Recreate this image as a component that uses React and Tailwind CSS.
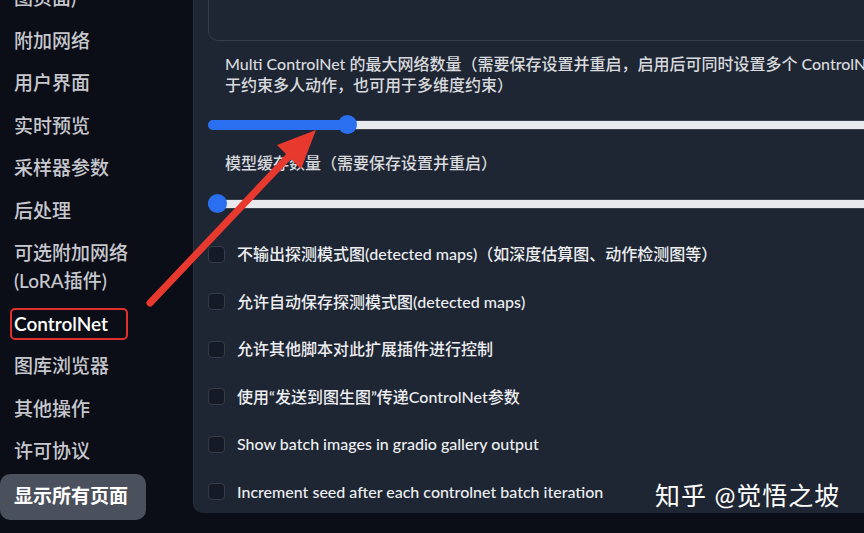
import React from "react";

const navItems = [
  "图页面)",
  "附加网络",
  "用户界面",
  "实时预览",
  "采样器参数",
  "后处理",
  "可选附加网络 (LoRA插件)",
  "ControlNet",
  "图库浏览器",
  "其他操作",
  "许可协议",
];

const options = [
  "不输出探测模式图(detected maps)（如深度估算图、动作检测图等）",
  "允许自动保存探测模式图(detected maps)",
  "允许其他脚本对此扩展插件进行控制",
  "使用“发送到图生图”传递ControlNet参数",
  "Show batch images in gradio gallery output",
  "Increment seed after each controlnet batch iteration",
];

const Slider = ({ value }) => (
  <div className="relative h-[18px] flex items-center">
    <div className="h-[10px] w-full rounded-full bg-[#e8e9ec] border border-[#3a404c]" />
    <div
      className="absolute left-0 h-[10px] rounded-full bg-[#2a6ff0]"
      style={{ width: value }}
    />
    <div
      className="absolute h-[19px] w-[19px] rounded-full bg-[#2a6ff0]"
      style={{ left: `calc(${value} - 9.5px)` }}
    />
  </div>
);

export default function App() {
  return (
    <div
      className="relative w-[864px] h-[533px] overflow-hidden bg-[#0b0d17] flex"
      style={{ fontFamily: '"Lato", "Noto Sans CJK SC", sans-serif' }}
    >
      {/* settings nav */}
      <div className="w-[193px] shrink-0 flex flex-col mt-[-23px]">
        {navItems.map((item) =>
          item === "ControlNet" ? (
            <div key={item} className="py-[7.25px] pl-[10px]">
              <span className="block w-[118px] h-[32px] -my-[2px] border-2 border-[#e0312b] rounded-[5px] pl-[2px] text-[19px] leading-[28px] font-semibold text-white">
                {item}
              </span>
            </div>
          ) : (
            <div
              key={item}
              className="py-[7.25px] pl-[14px] pr-[20px] text-[19px] leading-[28px] font-medium text-[#c6c8ce]"
            >
              {item}
            </div>
          )
        )}
        <div className="mt-[1px] w-[146px] h-[46px] rounded-[10px] bg-[#4b515c] pl-[14px] flex items-center text-[19px] font-bold text-white">
          显示所有页面
        </div>
      </div>

      {/* settings panel */}
      <div className="w-[780px] shrink-0 h-[513px] bg-[#1f2633] border-l border-[#2a303c] rounded-bl-[10px] overflow-hidden pl-[14px] flex flex-col">
        <div className="h-[90px] mt-[-49px] rounded-[10px] border border-[#363d4a] shrink-0" />

        <div className="mt-[12px] pl-[17px] text-[16px] leading-[21px] font-medium text-[#d8dade]">
          <div className="whitespace-nowrap">
            Multi ControlNet 的最大网络数量（需要保存设置并重启，启用后可同时设置多个 ControlNet 用
          </div>
          <div>于约束多人动作，也可用于多维度约束）</div>
        </div>

        <div className="mt-[20.5px]">
          <Slider value="139px" />
        </div>

        <div className="mt-[18.5px] pl-[17px] text-[16px] leading-[21px] font-medium text-[#d8dade]">
          模型缓存数量（需要保存设置并重启）
        </div>

        <div className="mt-[21.5px]">
          <Slider value="9.5px" />
        </div>

        <div className="mt-[18px] flex flex-col">
          {options.map((label) => (
            <div key={label} className="h-[47.5px] flex items-center gap-[12px]">
              <span className="w-[17px] h-[17px] rounded-[4px] bg-[#141a26] border border-[#353c49] shrink-0" />
              <span className="text-[16px] font-medium whitespace-nowrap text-[#eceef1]">
                {label}
              </span>
            </div>
          ))}
        </div>
      </div>

      {/* annotation arrow */}
      <svg
        className="absolute left-0 top-0 pointer-events-none"
        width="864"
        height="533"
        viewBox="0 0 864 533"
      >
        <line
          x1="150"
          y1="303"
          x2="293"
          y2="152"
          stroke="#e8392f"
          strokeWidth="7"
          strokeLinecap="round"
        />
        <polygon points="316,130 277,145 301,169" fill="#e8392f" />
      </svg>

      <div className="absolute left-[655px] top-[477px] text-[25px] leading-[36px] tracking-[1px] text-white">
        知乎 @觉悟之坡
      </div>
    </div>
  );
}
